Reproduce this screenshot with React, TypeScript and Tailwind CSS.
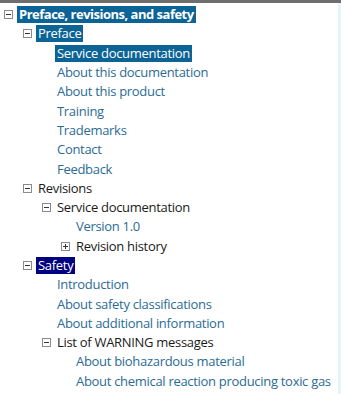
import React from "react";

type Row = {
  level: number;
  label: string;
  box?: "minus" | "plus";
  kind: "top" | "node" | "leaf";
  hl?: "blue" | "navy";
};

const rows: Row[] = [
  { level: 0, label: "Preface, revisions, and safety", box: "minus", kind: "top", hl: "blue" },
  { level: 1, label: "Preface", box: "minus", kind: "node", hl: "blue" },
  { level: 2, label: "Service documentation", kind: "leaf", hl: "blue" },
  { level: 2, label: "About this documentation", kind: "leaf" },
  { level: 2, label: "About this product", kind: "leaf" },
  { level: 2, label: "Training", kind: "leaf" },
  { level: 2, label: "Trademarks", kind: "leaf" },
  { level: 2, label: "Contact", kind: "leaf" },
  { level: 2, label: "Feedback", kind: "leaf" },
  { level: 1, label: "Revisions", box: "minus", kind: "node" },
  { level: 2, label: "Service documentation", box: "minus", kind: "node" },
  { level: 3, label: "Version 1.0", kind: "leaf" },
  { level: 3, label: "Revision history", box: "plus", kind: "node" },
  { level: 1, label: "Safety", box: "minus", kind: "node", hl: "navy" },
  { level: 2, label: "Introduction", kind: "leaf" },
  { level: 2, label: "About safety classifications", kind: "leaf" },
  { level: 2, label: "About additional information", kind: "leaf" },
  { level: 2, label: "List of WARNING messages", box: "minus", kind: "node" },
  { level: 3, label: "About biohazardous material", kind: "leaf" },
  { level: 3, label: "About chemical reaction producing toxic gas", kind: "leaf" },
];

const indents = ["pl-[4px]", "pl-[23px]", "pl-[42px]", "pl-[61px]"];

function Box({ type }: { type: "minus" | "plus" }) {
  return (
    <svg width="9" height="9" viewBox="0 0 9 9" className="block shrink-0">
      <rect x="0.5" y="0.5" width="8" height="8" fill="#fff" stroke="#8a8a8a" />
      <line x1="2" y1="4.5" x2="7" y2="4.5" stroke="#333" />
      {type === "plus" && <line x1="4.5" y1="2" x2="4.5" y2="7" stroke="#333" />}
    </svg>
  );
}

export default function App() {
  return (
    <div
      className="w-[341px] h-[394px] bg-white border-t-[3px] border-[#6e6e6e] overflow-hidden flex"
      style={{ fontFamily: '"Open Sans", "Noto Sans", sans-serif' }}
    >
      <div className="flex-1 pt-[2px]">
        {rows.map((r, i) => {
          const color =
            r.hl === "blue"
              ? "bg-[#0b6396] text-white"
              : r.hl === "navy"
              ? "bg-[#000080] text-white"
              : r.kind === "leaf"
              ? "text-[#2b6b95]"
              : "text-[#1a1a1a]";
          return (
            <div key={i} className={`flex items-center h-[19.3px] ${indents[r.level]}`}>
              <div className="w-[13px] shrink-0 flex items-center">
                {r.box && <Box type={r.box} />}
              </div>
              <span
                className={`${color} ${
                  r.kind === "top" ? "font-bold tracking-[-0.5px]" : "tracking-[-0.3px]"
                } px-[2px] text-[13px] leading-[17px] whitespace-nowrap`}
              >
                {r.label}
              </span>
            </div>
          );
        })}
      </div>
      <div className="w-[3px] bg-[#e4f6f8]" />
    </div>
  );
}
